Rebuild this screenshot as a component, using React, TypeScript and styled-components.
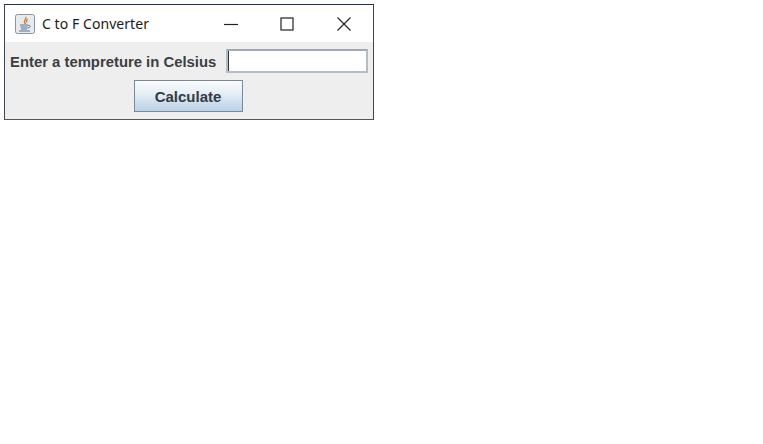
import React from 'react'
import styled, { createGlobalStyle } from 'styled-components'

const GlobalStyle = createGlobalStyle`
  html, body {
    margin: 0;
    padding: 0;
    background: #fff;
  }
`
const Page = styled.div`
  padding: 4px;
`
const Frame = styled.div`
  box-sizing: border-box;
  width: 370px;
  height: 116px;
  display: flex;
  flex-direction: column;
  border: 1px solid #3c4650;
  border-top-color: #1f3350;
  border-bottom-color: #555;
  background: #eeeeee;
`
const TitleBar = styled.div`
  height: 37px;
  flex: none;
  display: flex;
  align-items: center;
  background: #fff;
  padding: 0 1px 0 10px;
`
const Title = styled.span`
  font: 14px 'Noto Sans', 'Open Sans', sans-serif;
  letter-spacing: 0.06px;
  color: #1a1a1a;
  margin-left: 7px;
  flex: 1;
`
const WinButton = styled.button`
  width: 57px;
  height: 37px;
  padding: 0;
  border: 0;
  background: none;
  display: flex;
  align-items: center;
  justify-content: center;
`
const Content = styled.div`
  flex: 1;
  display: flex;
  flex-direction: column;
  align-items: center;
`
const Row = styled.div`
  display: flex;
  align-items: center;
  align-self: stretch;
  padding: 7px 5px 0 5px;
`
const Label = styled.label`
  font: bold 14.85px 'Liberation Sans', Arial, sans-serif;
  color: #3a3f45;
  flex: 1;
  padding-top: 2px;
`
const Field = styled.div`
  box-sizing: border-box;
  width: 142px;
  height: 24px;
  background: #fff;
  border: 2px solid #b4bdc6;
  border-top-color: #9ea9b4;
  position: relative;
`
const Caret = styled.span`
  position: absolute;
  left: 0;
  top: 0;
  bottom: 0;
  width: 1px;
  background: #333;
`
const CalcButton = styled.button`
  box-sizing: border-box;
  width: 109px;
  height: 32px;
  margin-top: 7px;
  margin-right: 2px;
  padding: 0;
  border: 1px solid #7a8a9a;
  background: linear-gradient(#fbfcfe 0%, #e6eef6 40%, #b9d0e6 100%);
  font: bold 15px 'Liberation Sans', Arial, sans-serif;
  color: #333a42;
`

const JavaIcon = () => (
  <svg width="20" height="20" viewBox="0 0 20 20">
    <rect x="0.5" y="0.5" width="19" height="19" rx="2" fill="#e6ebf0" stroke="#8595a5" />
    <path d="M10.5 3 C12.5 5 8 6.5 9.5 8.5 C10 9.3 10.5 9.5 10.5 10 M12.5 5 C11.5 6.3 11 7 12 8.5" fill="none" stroke="#e2731e" strokeWidth="1.3" />
    <path d="M5 11 H13 M5.5 13 H12.5 M6 15 H12 M4 17 H15 M13 11.5 C16 10.5 16 14 12.5 14" fill="none" stroke="#5d7287" strokeWidth="1" />
  </svg>
)

export default function App() {
  return (
    <Page>
      <GlobalStyle />
      <Frame>
        <TitleBar>
          <JavaIcon />
          <Title>C to F Converter</Title>
          <WinButton>
            <svg width="16" height="14" viewBox="0 0 16 14">
              <path d="M2 7.5 H16" stroke="#222" strokeWidth="1.2" />
            </svg>
          </WinButton>
          <WinButton>
            <svg width="14" height="14" viewBox="0 0 14 14">
              <rect x="1" y="1" width="12" height="12" fill="none" stroke="#222" strokeWidth="1.2" />
            </svg>
          </WinButton>
          <WinButton>
            <svg width="16" height="16" viewBox="0 0 16 16">
              <path d="M1.5 1.5 L14.5 14.5 M14.5 1.5 L1.5 14.5" stroke="#222" strokeWidth="1.1" />
            </svg>
          </WinButton>
        </TitleBar>
        <Content>
          <Row>
            <Label>Enter a tempreture in Celsius</Label>
            <Field>
              <Caret />
            </Field>
          </Row>
          <CalcButton>Calculate</CalcButton>
        </Content>
      </Frame>
    </Page>
  )
}
